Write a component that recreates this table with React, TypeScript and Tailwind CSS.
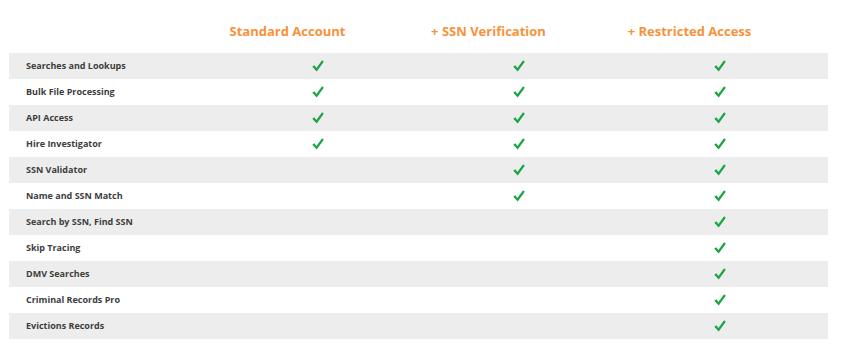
import React from "react";

const rows: [string, number][] = [
  ["Searches and Lookups", 3],
  ["Bulk File Processing", 3],
  ["API Access", 3],
  ["Hire Investigator", 3],
  ["SSN Validator", 2],
  ["Name and SSN Match", 2],
  ["Search by SSN, Find SSN", 1],
  ["Skip Tracing", 1],
  ["DMV Searches", 1],
  ["Criminal Records Pro", 1],
  ["Evictions Records", 1],
];

function Check() {
  return (
    <svg width="12" height="12" viewBox="0 0 12 12">
      <path
        d="M0.3 6.8 L2.3 5.2 L4.4 7.9 L10.1 0.3 L11.8 1.7 L4.7 11.6 Z"
        fill="#1aa443"
      />
    </svg>
  );
}

export default function App() {
  return (
    <div
      className="w-[845px] h-[354px] bg-white"
      style={{ fontFamily: '"Open Sans", sans-serif' }}
    >
      <div className="ml-[9px] w-[819px]">
        <div className="grid grid-cols-[208px_201px_201px_201px] h-[53px] pt-[21px]">
          <div />
          {["Standard Account", "+ SSN Verification", "+ Restricted Access"].map((h) => (
            <div
              key={h}
              className="pr-[60px] text-center text-[13px] leading-[20px] font-bold text-[#f7923a] whitespace-nowrap"
            >
              {h}
            </div>
          ))}
        </div>
        {rows.map(([label, n], i) => (
          <div
            key={label}
            className={`grid grid-cols-[208px_201px_201px_201px] h-[26px] items-center ${
              i % 2 === 0 ? "bg-[#ededed]" : "bg-white"
            }`}
          >
            <div className="pl-[17px] text-[9px] leading-[26px] font-bold text-[#3d3d3d] whitespace-nowrap">
              {label}
            </div>
            {[3, 2, 1].map((need) => (
              <div key={need} className="flex justify-center items-center">
                {n >= need ? <Check /> : null}
              </div>
            ))}
          </div>
        ))}
      </div>
    </div>
  );
}
